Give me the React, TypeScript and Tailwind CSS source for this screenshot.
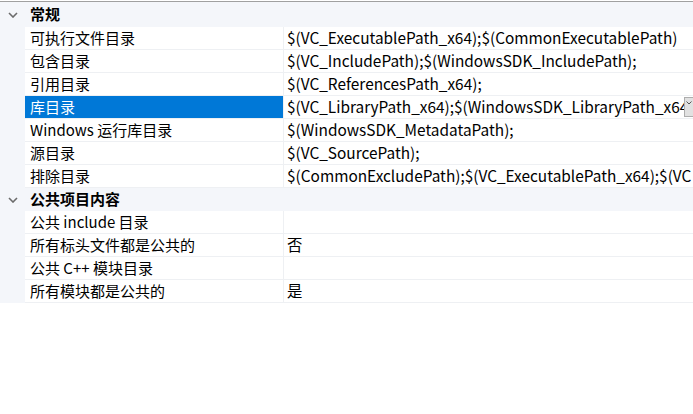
import React from "react";

const FONT = { fontFamily: '"Noto Sans CJK SC", "Noto Sans", sans-serif' };

function Chevron() {
  return (
    <svg width="10" height="6" viewBox="0 0 10 6" className="block">
      <path d="M1 1 L5 5 L9 1" fill="none" stroke="#6b6b6b" strokeWidth="1.6" />
    </svg>
  );
}

function Header({ label, h }: { label: string; h: string }) {
  return (
    <div className={`flex items-center bg-[#f4f6fa] ${h}`}>
      <div className="w-[25px] flex justify-center pl-[1px]">
        <Chevron />
      </div>
      <div className="pl-[5px] font-bold text-[15px] text-black">{label}</div>
    </div>
  );
}

function Row({
  name,
  value,
  selected,
}: {
  name: string;
  value: string;
  selected?: boolean;
}) {
  return (
    <div className="flex h-[23px]">
      <div className="w-[25px] shrink-0 bg-[#f4f6fa]" />
      <div
        className={`w-[258px] shrink-0 flex items-center pl-[5px] border-b border-[#eef0f3] text-[15px] ${
          selected ? "bg-[#0078d7] text-white border-[#0078d7]" : "bg-white text-black"
        }`}
      >
        <span className="whitespace-nowrap">{name}</span>
      </div>
      <div className="w-px shrink-0 bg-[#eef0f3]" />
      <div className="flex-1 min-w-0 flex items-center bg-white border-b border-[#eef0f3] relative">
        <span className="pl-[3px] whitespace-nowrap overflow-hidden text-[15.4px] text-black flex-1 min-w-0">
          {value}
        </span>
        {selected && (
          <div className="w-[9px] h-[20px] shrink-0 bg-[#e1e1e1] border border-[#adadad] border-r-0 flex items-start justify-center pt-[3px]">
            <svg width="6" height="4" viewBox="0 0 6 4">
              <path d="M0.5 0.5 L3 3 L5.5 0.5" fill="none" stroke="#555" strokeWidth="1" />
            </svg>
          </div>
        )}
      </div>
    </div>
  );
}

export default function App() {
  const general = [
    ["可执行文件目录", "$(VC_ExecutablePath_x64);$(CommonExecutablePath)"],
    ["包含目录", "$(VC_IncludePath);$(WindowsSDK_IncludePath);"],
    ["引用目录", "$(VC_ReferencesPath_x64);"],
    ["库目录", "$(VC_LibraryPath_x64);$(WindowsSDK_LibraryPath_x64)"],
    ["Windows 运行库目录", "$(WindowsSDK_MetadataPath);"],
    ["源目录", "$(VC_SourcePath);"],
    ["排除目录", "$(CommonExcludePath);$(VC_ExecutablePath_x64);$(VC"],
  ];
  const pub = [
    ["公共 include 目录", ""],
    ["所有标头文件都是公共的", "否"],
    ["公共 C++ 模块目录", ""],
    ["所有模块都是公共的", "是"],
  ];
  return (
    <div className="w-[693px] h-[414px] bg-white overflow-hidden" style={FONT}>
      <div className="h-px bg-white" />
      <div className="h-px bg-[#a0a0a0]" />
      <Header label="常规" h="h-[25px]" />
      {general.map(([n, v], i) => (
        <Row key={n} name={n} value={v} selected={i === 3} />
      ))}
      <Header label="公共项目内容" h="h-[23px]" />
      {pub.map(([n, v]) => (
        <Row key={n} name={n} value={v} />
      ))}
    </div>
  );
}
